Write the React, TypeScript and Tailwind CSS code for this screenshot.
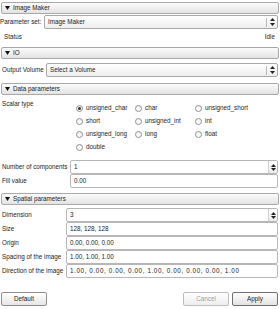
import React from "react";

function Header({ title }: { title: string }) {
  return (
    <div className="mx-[1px] flex h-[12px] items-center gap-[3px] rounded-[2px] border border-[#a9a9a9] bg-gradient-to-b from-[#fbfbfb] to-[#e3e3e3] pl-[3px]">
      <svg width="5" height="4" viewBox="0 0 5 4">
        <path d="M0 0h5L2.5 4z" fill="#111" />
      </svg>
      <span>{title}</span>
    </div>
  );
}

function UpDown() {
  return (
    <svg width="5" height="8" viewBox="0 0 5 8">
      <path d="M0 3h5L2.5 0z" fill="#222" />
      <path d="M0 5h5L2.5 8z" fill="#222" />
    </svg>
  );
}

function Combo({ value }: { value: string }) {
  return (
    <div className="flex h-full flex-1 items-center rounded-[2px] border border-[#a8a8a8] bg-gradient-to-b from-white to-[#eeeeee]">
      <span className="flex-1 pl-[3px]">{value}</span>
      <div className="h-[9px] w-px bg-[#b8b8b8]" />
      <div className="flex w-[10px] justify-center">
        <UpDown />
      </div>
    </div>
  );
}

function Field({
  value,
  spin,
  wide,
}: {
  value: string;
  spin?: boolean;
  wide?: boolean;
}) {
  return (
    <div className="flex h-full min-w-0 flex-1 items-center rounded-[2px] border border-[#b7b7b7] bg-white">
      <span
        className={`flex-1 whitespace-nowrap pl-[3px] ${wide ? "tracking-[0.6px]" : ""}`}
      >
        {value}
      </span>
      {spin && (
        <div className="flex h-full w-[9px] flex-col items-center justify-center gap-[1px] border-l border-[#d0d0d0] bg-gradient-to-b from-white to-[#ececec]">
          <svg width="5" height="3" viewBox="0 0 5 3">
            <path d="M0 3h5L2.5 0z" fill="#222" />
          </svg>
          <svg width="5" height="3" viewBox="0 0 5 3">
            <path d="M0 0h5L2.5 3z" fill="#222" />
          </svg>
        </div>
      )}
    </div>
  );
}

function Row({
  label,
  labelW,
  children,
}: {
  label: string;
  labelW: string;
  children: React.ReactNode;
}) {
  return (
    <div className="flex h-[14px] items-center pr-[2px]">
      <div className={`${labelW} shrink-0 whitespace-nowrap pl-[2px]`}>{label}</div>
      {children}
    </div>
  );
}

function Radio({ label, checked }: { label: string; checked?: boolean }) {
  return (
    <div className="flex h-[13px] items-center gap-[3px]">
      <div className="flex h-[7px] w-[7px] items-center justify-center rounded-full border border-[#8f8f8f] bg-gradient-to-b from-[#f2f2f2] to-white">
        {checked && <div className="h-[3px] w-[3px] rounded-full bg-[#333]" />}
      </div>
      <span>{label}</span>
    </div>
  );
}

export default function App() {
  const scalars = [
    "unsigned_char",
    "char",
    "unsigned_short",
    "short",
    "unsigned_int",
    "int",
    "unsigned_long",
    "long",
    "float",
    "double",
  ];

  return (
    <div className="h-[309px] w-[280px] overflow-hidden bg-white pt-[2px] font-['Liberation_Sans',Arial,sans-serif] text-[6.3px] leading-none text-[#1c1c1c]">
      <Header title="Image Maker" />

      <div className="mt-[1px] flex h-[14px] items-center pr-[2px]">
        <div className="w-[44px] shrink-0 whitespace-nowrap">Parameter set:</div>
        <Combo value="Image Maker" />
      </div>

      <div className="flex h-[16px] items-center justify-between pl-[4px] pr-[5px]">
        <span>Status</span>
        <span>Idle</span>
      </div>

      <div className="mt-[2px]">
        <Header title="IO" />
      </div>

      <div className="mt-[4px] flex h-[14px] items-center pr-[2px]">
        <div className="w-[46px] shrink-0 whitespace-nowrap pl-[2px]">Output Volume</div>
        <Combo value="Select a Volume" />
      </div>

      <div className="mt-[6px]">
        <Header title="Data parameters" />
      </div>

      <div className="mt-[5px] flex">
        <div className="w-[76px] pl-[2px] pt-[1px]">Scalar type</div>
        <div className="grid grid-cols-[59px_60px_1fr] pt-[2px]">
          {scalars.map((s, i) => (
            <Radio key={s} label={s} checked={i === 0} />
          ))}
        </div>
      </div>

      <div className="mt-[6px]">
        <Row label="Number of components" labelW="w-[70px]">
          <Field value="1" spin />
        </Row>
        <Row label="Fill value" labelW="w-[70px]">
          <Field value="0.00" />
        </Row>
      </div>

      <div className="mt-[5px]">
        <Header title="Spatial parameters" />
      </div>

      <div className="mt-[3px]">
        <Row label="Dimension" labelW="w-[66px]">
          <Field value="3" spin />
        </Row>
        <Row label="Size" labelW="w-[66px]">
          <Field value="128, 128, 128" />
        </Row>
        <Row label="Origin" labelW="w-[66px]">
          <Field value="0.00, 0.00, 0.00" />
        </Row>
        <Row label="Spacing of the image" labelW="w-[66px]">
          <Field value="1.00, 1.00, 1.00" />
        </Row>
        <Row label="Direction of the image" labelW="w-[66px]">
          <Field
            value="1.00, 0.00, 0.00, 0.00, 1.00, 0.00, 0.00, 0.00, 1.00"
            wide
          />
        </Row>
      </div>

      <div className="mt-[14px] flex h-[14px] items-stretch pl-[1px] pr-[2px]">
        <button className="w-[46px] rounded-[2px] border border-[#8d8d8d] bg-gradient-to-b from-white to-[#e6e6e6]">
          Default
        </button>
        <div className="flex-1" />
        <button className="w-[46px] rounded-[2px] border border-[#bdbdbd] bg-gradient-to-b from-white to-[#ededed] text-[#a0a0a0]">
          Cancel
        </button>
        <button className="ml-[3px] w-[46px] rounded-[2px] border border-[#6f6f6f] bg-gradient-to-b from-white to-[#e2e2e2]">
          Apply
        </button>
      </div>
    </div>
  );
}
